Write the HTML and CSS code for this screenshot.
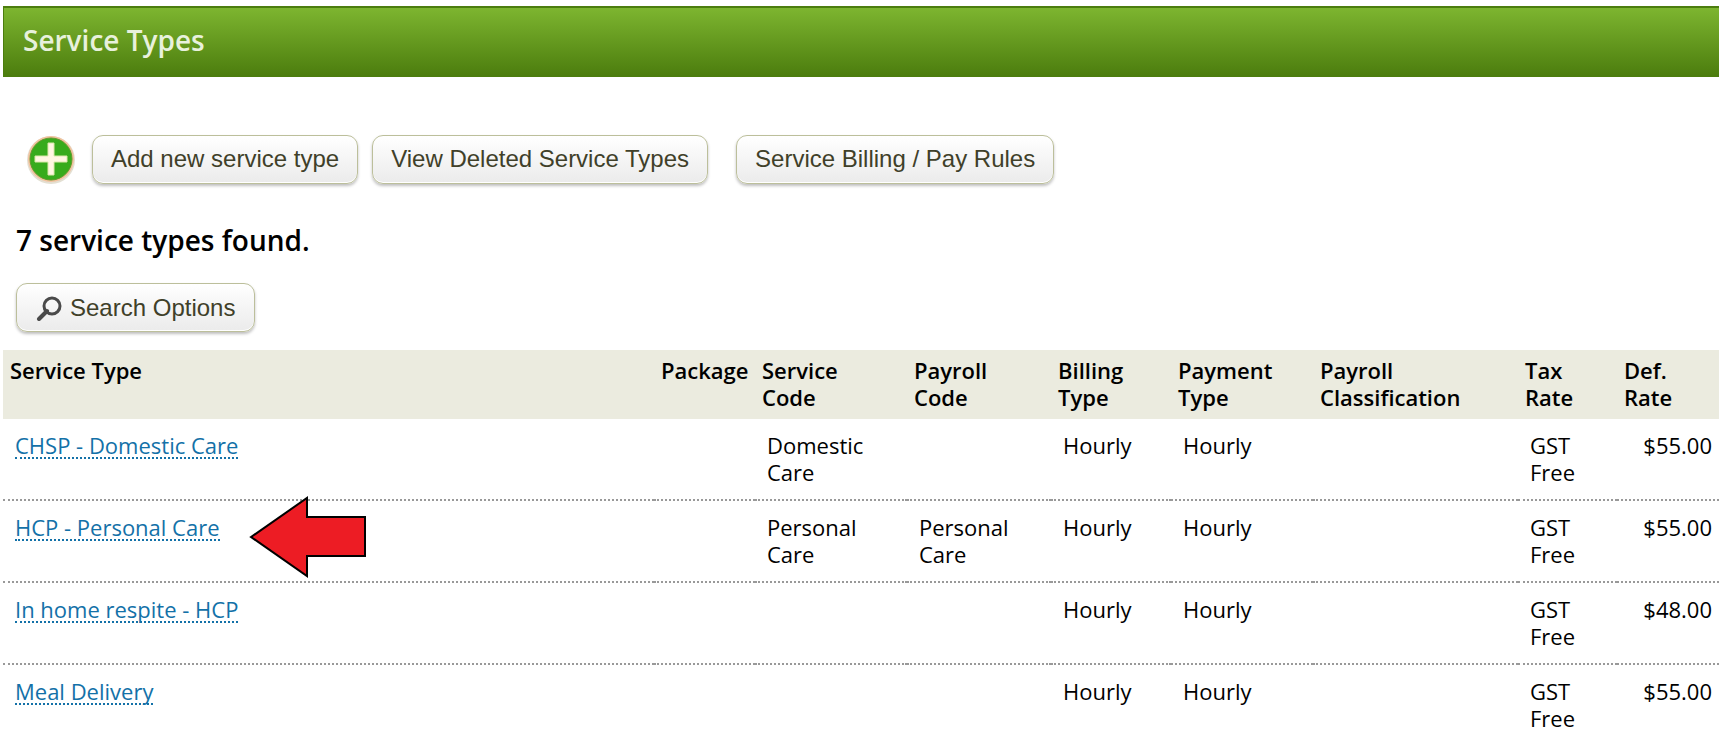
FILE: index.html
```html
<!DOCTYPE html>
<html lang="en">
<head>
<meta charset="UTF-8" />
<meta name="viewport" content="width=device-width, initial-scale=1" />
<title>Service Types</title>
<link rel="stylesheet" href="styles.css">
</head>
<body>

<header class="page-header">
  <h1>Service Types</h1>
</header>

<main>
  <div class="toolbar">
    <svg class="add-icon" viewBox="0 0 54 54" aria-hidden="true">
      <circle cx="27" cy="28" r="24" fill="#e3dfd2" />
      <circle cx="27" cy="27" r="23" fill="#f3c3a0" />
      <circle cx="27" cy="27" r="21" fill="#37ab1c" stroke="#5f9a2c" stroke-width="1" />
      <path d="M24 11h6v13h13v6H30v13h-6V30H11v-6h13z" fill="#fff6e2" stroke="#d9e8a8" stroke-width="1" />
    </svg>
    <button type="button" class="btn">Add new service type</button>
    <button type="button" class="btn">View Deleted Service Types</button>
    <button type="button" class="btn btn-rules">Service Billing / Pay Rules</button>
  </div>

  <h2>7 service types found.</h2>

  <button type="button" class="btn btn-search">
    <svg class="search-icon" viewBox="0 0 26 26" aria-hidden="true">
      <path d="M3 24l8-8" stroke="#4a4a4a" stroke-width="4" stroke-linecap="round" />
      <circle cx="16" cy="11" r="8" fill="none" stroke="#4a4a4a" stroke-width="3" />
    </svg>
    Search Options
  </button>

  <table>
    <colgroup>
      <col>
      <col class="col-package">
      <col class="col-service">
      <col class="col-payroll">
      <col class="col-billing">
      <col class="col-payment">
      <col class="col-class">
      <col class="col-tax">
      <col class="col-rate">
    </colgroup>
    <thead>
      <tr>
        <th>Service Type</th>
        <th>Package</th>
        <th>Service<br>Code</th>
        <th>Payroll<br>Code</th>
        <th>Billing<br>Type</th>
        <th>Payment<br>Type</th>
        <th>Payroll<br>Classification</th>
        <th>Tax<br>Rate</th>
        <th>Def.<br>Rate</th>
      </tr>
    </thead>
    <tbody>
      <tr>
        <td><a href="#">CHSP - Domestic Care</a></td>
        <td></td>
        <td>Domestic Care</td>
        <td></td>
        <td>Hourly</td>
        <td>Hourly</td>
        <td></td>
        <td>GST Free</td>
        <td class="rate">$55.00</td>
      </tr>
      <tr>
        <td class="marked">
          <a href="#">HCP - Personal Care</a>
          <svg class="arrow" viewBox="0 0 118 82" aria-hidden="true">
            <path d="M2 41L58 2v19h58v39H58v20z" fill="#ed1c24" stroke="#000" stroke-width="2" />
          </svg>
        </td>
        <td></td>
        <td>Personal Care</td>
        <td>Personal Care</td>
        <td>Hourly</td>
        <td>Hourly</td>
        <td></td>
        <td>GST Free</td>
        <td class="rate">$55.00</td>
      </tr>
      <tr>
        <td><a href="#">In home respite - HCP</a></td>
        <td></td>
        <td></td>
        <td></td>
        <td>Hourly</td>
        <td>Hourly</td>
        <td></td>
        <td>GST Free</td>
        <td class="rate">$48.00</td>
      </tr>
      <tr>
        <td><a href="#">Meal Delivery</a></td>
        <td></td>
        <td></td>
        <td></td>
        <td>Hourly</td>
        <td>Hourly</td>
        <td></td>
        <td>GST Free</td>
        <td class="rate">$55.00</td>
      </tr>
    </tbody>
  </table>
</main>

</body>
</html>
```
FILE: styles.css
```css
:root {
  --green-light: #7db530;
  --green-dark: #4c7d0e;
  --beige: #ebebdf;
  --link: #1371a8;
}
* {
  box-sizing: border-box;
}
body {
  margin: 0;
  padding: 6px 0 0 3px;
  font-family: "Trebuchet MS", "Open Sans", "Noto Sans", sans-serif;
  font-size: 22px;
  line-height: 27px;
  color: #000;
  background: white;
}
.page-header {
  padding: 14px 19px 18px;
  border: 1px solid var(--green-dark);
  border-top-width: 2px;
  border-right: none;
  background: linear-gradient(var(--green-light), var(--green-dark));
}
h1 {
  margin: 0;
  font-size: 28px;
  line-height: 36px;
  font-weight: 600;
  color: #e8f1dc;
}
.toolbar {
  display: flex;
  align-items: center;
  gap: 14px;
  padding: 55px 21px 0;
}
.add-icon {
  width: 54px;
  height: 54px;
}
.btn {
  height: 49px;
  padding: 0 18px;
  border: 1px solid #bcbf9b;
  border-radius: 11px;
  background: linear-gradient(#fff, #ebebeb);
  box-shadow: 0 2px 3px rgba(0, 0, 0, 0.25), inset 0 -1px 0 #fff;
  font-family: "Liberation Sans", Arial, sans-serif;
  font-size: 24px;
  color: #404029;
  cursor: pointer;
}
.btn-rules {
  margin-left: 14px;
}
h2 {
  margin: 36px 13px 25px;
  font-size: 28px;
  line-height: 36px;
  font-weight: 600;
}
.btn-search {
  display: flex;
  align-items: center;
  gap: 8px;
  margin: 0 13px 18px;
  padding: 0 19px;
}
.search-icon {
  width: 26px;
  height: 26px;
}
table {
  width: 100%;
  table-layout: fixed;
  border-collapse: collapse;
}
.col-package { width: 101px; }
.col-service { width: 152px; }
.col-payroll { width: 144px; }
.col-billing { width: 120px; }
.col-payment { width: 142px; }
.col-class { width: 205px; }
.col-tax { width: 99px; }
.col-rate { width: 102px; }
th, td {
  text-align: left;
  vertical-align: top;
}
th {
  padding: 7px 7px 8px;
  font-weight: 600;
  background: var(--beige);
}
tbody tr {
  border-bottom: 2px dotted #999;
}
td {
  padding: 13px 24px 13px 12px;
}
td.rate {
  padding-right: 7px;
  text-align: right;
}
td a {
  display: inline-block;
  line-height: 24px;
  color: var(--link);
  text-decoration: none;
  border-bottom: 2px dotted var(--link);
}
.marked {
  position: relative;
}
.arrow {
  position: absolute;
  left: 246px;
  top: -5px;
  width: 118px;
  height: 82px;
}
```
